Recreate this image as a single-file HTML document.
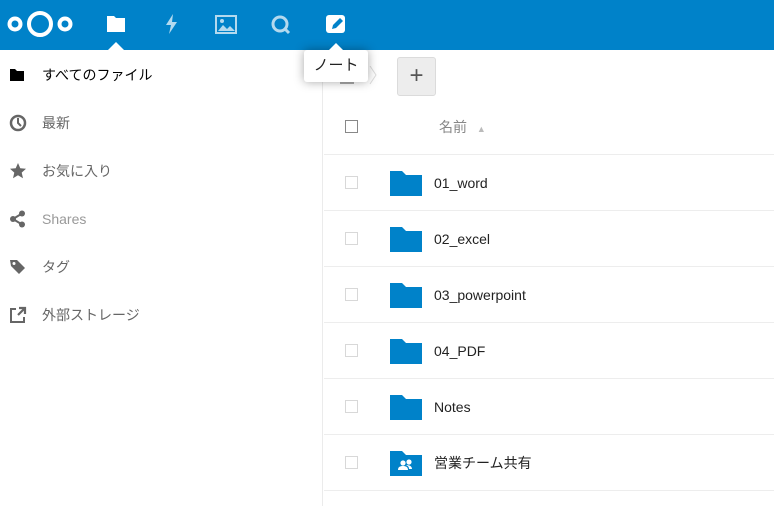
<!DOCTYPE html>
<html><head><meta charset="utf-8"><style>
*{margin:0;padding:0;box-sizing:border-box}
body{width:774px;height:506px;overflow:hidden;background:#fff;font-family:"Liberation Sans","Noto Sans CJK JP",sans-serif;position:relative}
.hdr{position:absolute;left:0;top:0;width:774px;height:50px;background:#0082c9}
.side{position:absolute;left:0;top:50px;width:323px;height:456px;border-right:1px solid #ebebeb}
.nav{position:absolute;left:0;height:48px;width:323px;font-size:14px;color:#666}
.nav span{position:absolute;left:42px;top:50%;transform:translateY(-50%)}
.nav svg{position:absolute;left:9px;top:50%;transform:translateY(-50%)}
.row{position:absolute;left:324px;width:450px;height:56px;border-bottom:1px solid #ededed}
.cb{position:absolute;left:21px;top:21px;width:13px;height:13px;border:1px solid #d8d8d8;background:#fff}
.row svg{position:absolute;left:66px;top:15px}
.row .n{position:absolute;left:110px;top:50%;transform:translateY(-50%);font-size:14px;color:#222}
</style></head><body>
<div class="hdr">
<svg width="80" height="50" style="position:absolute;left:0;top:0"><g fill="none" stroke="#fff" stroke-width="4"><circle cx="15" cy="24" r="5.5"/><circle cx="40" cy="24" r="11"/><circle cx="65" cy="24" r="5.5"/></g></svg>
<svg width="20" height="20" style="position:absolute;left:106px;top:14px"><path d="M1 2h7l2 2h9v14H1z" fill="#fff"/></svg>
<svg width="14" height="20" style="position:absolute;left:165px;top:14px"><path d="M8 0L1 11h5l-2 9 8-12H7z" fill="#fff" opacity=".7"/></svg>
<svg width="22" height="20" style="position:absolute;left:215px;top:15px" opacity=".7"><rect x="1" y="1" width="20" height="17" fill="none" stroke="#fff" stroke-width="2"/><path d="M3 16l5-6 4 4 3-3 5 5z" fill="#fff"/><circle cx="7" cy="6" r="2" fill="#fff"/></svg>
<svg width="22" height="22" style="position:absolute;left:270px;top:14px" opacity=".7"><circle cx="10" cy="10" r="7" fill="none" stroke="#fff" stroke-width="3"/><path d="M15 15l4 4" stroke="#fff" stroke-width="3"/></svg>
<svg width="20" height="20" style="position:absolute;left:326px;top:14px"><rect x="0" y="1" width="19" height="18" rx="3" fill="#fff"/><path d="M6 15l1-4 7-7 3 3-7 7z" fill="#0082c9"/></svg>
<div style="position:absolute;left:108px;top:42px;width:0;height:0;border:8px solid transparent;border-bottom-color:#fff;border-top:0"></div>
</div>
<div class="side">
<div class="nav" style="top:1px;color:#000"><svg width="16" height="16"><path d="M1 2h5l2 2h7v10H1z" fill="#000"/></svg><span>すべてのファイル</span></div>
<div class="nav" style="top:49px"><svg width="18" height="18"><circle cx="9" cy="9" r="7" fill="none" stroke="#666" stroke-width="2.5"/><path d="M9 4v5l3 3" stroke="#666" stroke-width="2" fill="none"/></svg><span>最新</span></div>
<div class="nav" style="top:97px"><svg width="18" height="18"><path d="M9 1l2.3 5.3 5.7.5-4.3 3.8 1.3 5.6L9 13.2 4 16.2l1.3-5.6L1 6.8l5.7-.5z" fill="#666"/></svg><span>お気に入り</span></div>
<div class="nav" style="top:145px"><svg width="18" height="18"><g fill="#666"><circle cx="4" cy="9" r="3"/><circle cx="13" cy="3.5" r="3"/><circle cx="13" cy="14.5" r="3"/></g><path d="M4 9L13 3.5M4 9l9 5.5" stroke="#666" stroke-width="2"/></svg><span style="color:#999">Shares</span></div>
<div class="nav" style="top:193px"><svg width="18" height="18"><path d="M1 2h7l8 8-6 6-8-8z" fill="#666"/><circle cx="5" cy="5.5" r="1.5" fill="#fff"/></svg><span>タグ</span></div>
<div class="nav" style="top:241px"><svg width="18" height="18"><path d="M7 3H2v13h13v-5" fill="none" stroke="#666" stroke-width="2"/><path d="M9 9l7-7M10 2h6v6" stroke="#666" stroke-width="2.2" fill="none"/></svg><span>外部ストレージ</span></div>
</div>
<svg width="20" height="20" style="position:absolute;left:368px;top:66px"><path d="M2 0l6 9-6 9" fill="none" stroke="#ddd" stroke-width="1"/></svg>
<div style="position:absolute;left:397px;top:57px;width:39px;height:39px;border:1px solid #dbdbdb;border-radius:3px;background:#ededed;color:#555;font-size:24px;text-align:center;line-height:36px">+</div>
<div style="position:absolute;left:340px;top:76px;width:14px;height:8px;background:#aaa"></div>
<div style="position:absolute;left:304px;top:50px;width:64px;height:32px;background:#fff;border-radius:3px;box-shadow:0 0 10px rgba(0,0,0,.35);font-size:15px;color:#222;text-align:center;line-height:32px">ノート</div>
<div style="position:absolute;left:328px;top:43px;width:0;height:0;border:8px solid transparent;border-bottom-color:#fff;border-top:0"></div>
<div class="row" style="top:99px;height:56px"><div class="cb" style="border-color:#888;top:21px"></div><span class="n" style="left:115px;color:#888">名前 <span style="font-size:9px;color:#bbb;margin-left:6px">▲</span></span></div>
<div class="row" style="top:155px"><div class="cb"></div><svg width="32" height="26"><path d="M0 1h12l4 4h16v21H0z" fill="#0082c9"/></svg><span class="n">01_word</span></div>
<div class="row" style="top:211px"><div class="cb"></div><svg width="32" height="26"><path d="M0 1h12l4 4h16v21H0z" fill="#0082c9"/></svg><span class="n">02_excel</span></div>
<div class="row" style="top:267px"><div class="cb"></div><svg width="32" height="26"><path d="M0 1h12l4 4h16v21H0z" fill="#0082c9"/></svg><span class="n">03_powerpoint</span></div>
<div class="row" style="top:323px"><div class="cb"></div><svg width="32" height="26"><path d="M0 1h12l4 4h16v21H0z" fill="#0082c9"/></svg><span class="n">04_PDF</span></div>
<div class="row" style="top:379px"><div class="cb"></div><svg width="32" height="26"><path d="M0 1h12l4 4h16v21H0z" fill="#0082c9"/></svg><span class="n">Notes</span></div>
<div class="row" style="top:435px"><div class="cb"></div><svg width="32" height="26"><path d="M0 1h12l4 4h16v21H0z" fill="#0082c9"/><g fill="#fff"><circle cx="13" cy="13" r="2.6"/><circle cx="19" cy="12" r="2.6"/><path d="M8 20c0-3 2-4 5-4s5 1 5 4zM16 15c3 0 6 1 6 4h-3c0-2-1-3-3-4z"/></g></svg><span class="n">営業チーム共有</span></div>
</body></html>
